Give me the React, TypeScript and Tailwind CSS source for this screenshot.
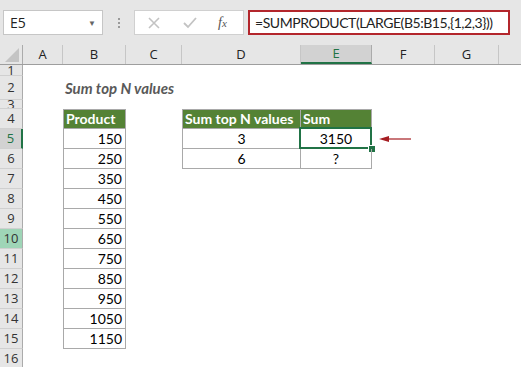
import React from "react";

const COLS = [
  { k: "A", w: 40 },
  { k: "B", w: 63 },
  { k: "C", w: 56 },
  { k: "D", w: 119 },
  { k: "E", w: 71 },
  { k: "F", w: 63 },
  { k: "G", w: 64 },
  { k: "H", w: 30 },
];

const ROWS: { n: number; h: number }[] = [
  { n: 1, h: 11 },
  { n: 2, h: 24 },
  { n: 3, h: 9 },
  ...Array.from({ length: 13 }, (_, i) => ({ n: i + 4, h: 20 })),
];

const products = [150, 250, 350, 450, 550, 650, 750, 850, 950, 1050, 1150];

const cellFont = { fontFamily: "Lato, 'Liberation Sans', sans-serif" };
const uiFont = { fontFamily: "'Open Sans', 'Noto Sans', sans-serif" };

function Cell({ row, col }: { row: number; col: string }) {
  const w = COLS.find((c) => c.k === col)!.w;
  const base = "h-full box-border shrink-0 relative flex items-center text-[14px] leading-none";
  const tb = "border-r border-b border-[#a9a9a9]";

  if (col === "B" && row === 2) {
    return (
      <div className={base} style={{ width: w }}>
        <span className="absolute left-[2px] whitespace-nowrap italic font-bold text-[#595959] text-[15px]" style={cellFont}>
          Sum top N values
        </span>
      </div>
    );
  }
  if (col === "B" && row === 4) {
    return (
      <div className={`${base} ${tb} border-l border-t bg-[#548235] text-white font-bold pl-[2px]`} style={{ width: w, ...cellFont }}>
        Product
      </div>
    );
  }
  if (col === "B" && row >= 5 && row <= 15) {
    return (
      <div className={`${base} ${tb} border-l justify-end pr-[3px] text-black`} style={{ width: w, ...cellFont }}>
        {products[row - 5]}
      </div>
    );
  }
  if (col === "D" && row === 4) {
    return (
      <div className={`${base} ${tb} border-l border-t bg-[#548235] text-white font-bold pl-[2px] whitespace-nowrap`} style={{ width: w, ...cellFont }}>
        Sum top N values
      </div>
    );
  }
  if (col === "E" && row === 4) {
    return (
      <div className={`${base} ${tb} border-t bg-[#548235] text-white font-bold pl-[2px]`} style={{ width: w, ...cellFont }}>
        Sum
      </div>
    );
  }
  if ((col === "D" || col === "E") && (row === 5 || row === 6)) {
    const txt = col === "D" ? (row === 5 ? "3" : "6") : row === 5 ? "3150" : "?";
    return (
      <div className={`${base} ${tb} ${col === "D" ? "border-l" : ""} justify-center text-black`} style={{ width: w, ...cellFont }}>
        {txt}
        {col === "E" && row === 5 && (
          <>
            <div className="absolute left-[-2px] top-[-2px] right-[-1px] bottom-[-1px] border-2 border-[#217346] pointer-events-none" />
            <div className="absolute right-[-4px] bottom-[-4px] w-[6px] h-[6px] bg-[#217346] outline outline-1 outline-white" />
          </>
        )}
      </div>
    );
  }
  if (col === "F" && row === 5) {
    return (
      <div className={base} style={{ width: w }}>
        <svg width="34" height="8" viewBox="0 0 34 8" className="absolute left-[7px] top-[6px]">
          <line x1="6" y1="4" x2="32" y2="4" stroke="#a51d22" strokeWidth="1.2" />
          <polygon points="0,4 10,1 10,7" fill="#a51d22" />
        </svg>
      </div>
    );
  }
  return <div className={base} style={{ width: w }} />;
}

function RowHeader({ n, h }: { n: number; h: number }) {
  let cls = "bg-[#e6e6e6] text-[#333] border-r border-[#ababab]";
  if (n === 5) cls = "bg-[#d2d2d2] text-[#217346] border-r-2 border-[#217346]";
  if (n === 10) cls = "bg-[#9fd5b7] text-[#333] border-r border-[#ababab]";
  return (
    <div
      className={`w-[23px] shrink-0 box-border border-b border-b-[#d0d0d0] flex items-center justify-center overflow-hidden text-[13px] leading-none ${cls}`}
      style={{ height: h, ...uiFont }}
    >
      {n}
    </div>
  );
}

export default function App() {
  return (
    <div className="w-[521px] h-[367px] overflow-hidden bg-white relative" style={uiFont}>
      {/* formula bar */}
      <div className="h-[45px] bg-[#e6e6e6] flex items-start pt-[10px]">
        <div className="ml-[3px] w-[100px] h-[25px] bg-white border border-[#c6c6c6] box-border flex items-center pl-[6px] pr-[6px] text-[14px] text-[#222]">
          <span>E5</span>
          <span className="ml-auto text-[8px] text-[#666]">▼</span>
        </div>
        <div className="w-[31px] h-[25px] flex flex-col items-center justify-center gap-[2px]">
          <div className="w-[2px] h-[2px] bg-[#9a9a9a]" />
          <div className="w-[2px] h-[2px] bg-[#9a9a9a]" />
          <div className="w-[2px] h-[2px] bg-[#9a9a9a]" />
        </div>
        <div className="w-[110px] h-[25px] bg-white border border-[#d0d0d0] box-border flex items-center">
          <svg width="12" height="12" viewBox="0 0 12 12" className="ml-[13px]">
            <path d="M1 1 L11 11 M11 1 L1 11" stroke="#c3c3c3" strokeWidth="1.6" />
          </svg>
          <svg width="14" height="12" viewBox="0 0 14 12" className="ml-[23px]">
            <path d="M1 6 L5 10 L13 1" stroke="#c3c3c3" strokeWidth="1.8" fill="none" />
          </svg>
          <span className="ml-[21px] italic text-[14px] text-[#555]" style={{ fontFamily: "'Liberation Serif', serif" }}>
            f<span className="text-[11px]">x</span>
          </span>
        </div>
        <div
          className="ml-[4px] w-[262px] h-[25px] bg-white border-2 border-[#b3262c] box-border flex items-center pl-[5px] text-[14px] tracking-[-0.45px] text-[#222] whitespace-nowrap overflow-hidden"
          style={cellFont}
        >
          =SUMPRODUCT(LARGE(B5:B15,{"{"}1,2,3{"}"}))
        </div>
      </div>

      {/* column headers */}
      <div className="flex h-[20px] bg-[#e6e6e6] border-b border-[#9e9e9e] box-border">
        <div className="w-[23px] shrink-0 h-full border-r border-[#ababab] box-border relative">
          <svg width="14" height="14" viewBox="0 0 14 14" className="absolute right-[3px] bottom-[2px]">
            <polygon points="14,0 14,14 0,14" fill="#c4c4c4" />
          </svg>
        </div>
        {COLS.map((c) => {
          const sel = c.k === "E";
          return (
            <div
              key={c.k}
              className={`shrink-0 h-full box-border flex items-center justify-center text-[13px] leading-none ${
                sel ? "bg-[#d2d2d2] text-[#217346] border-b-2 border-b-[#217346] border-r border-r-[#ababab] -mb-px" : "text-[#222] border-r border-[#c6c6c6]"
              }`}
              style={{ width: c.w }}
            >
              {c.k !== "H" ? c.k : ""}
            </div>
          );
        })}
      </div>

      {/* rows */}
      {ROWS.map((r) => (
        <div key={r.n} className="flex" style={{ height: r.h }}>
          <RowHeader n={r.n} h={r.h} />
          {COLS.map((c) => (
            <Cell key={c.k} row={r.n} col={c.k} />
          ))}
        </div>
      ))}
    </div>
  );
}
